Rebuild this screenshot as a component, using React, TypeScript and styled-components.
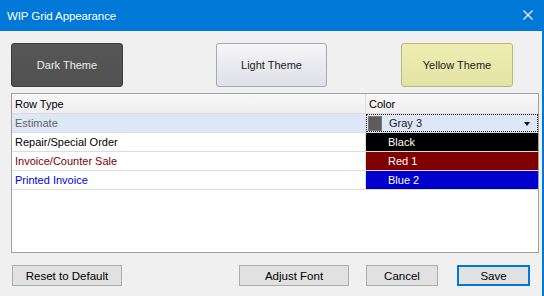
import React from "react";
import styled, { createGlobalStyle } from "styled-components";

const Global = createGlobalStyle`
  html, body { margin: 0; padding: 0; background: #f0f0f0; }
  * { box-sizing: border-box; }
`;

const Window = styled.div`
  width: 544px;
  height: 296px;
  background: #f0f0f0;
  border-right: 2px solid #0078d7;
  display: flex;
  flex-direction: column;
  font-family: "Liberation Sans", Arial, sans-serif;
  overflow: hidden;
`;

const TitleBar = styled.div`
  height: 31px;
  flex: none;
  background: #0078d7;
  display: flex;
  align-items: center;
  justify-content: space-between;
  padding: 0 9px 0 7px;
  color: #ffffff;
  font-size: 12px;
`;

const Title = styled.span`
  font-family: "Liberation Sans", Arial, sans-serif;
  font-size: 11.5px;
  letter-spacing: -0.1px;
`;

const Close = styled.svg`
  width: 10px;
  height: 10px;
  margin-bottom: 1px;
`;

const ThemeRow = styled.div`
  display: flex;
  padding: 12px 0 0 11px;
  height: 56px;
  flex: none;
`;

const variants = {
  dark: { bg: "linear-gradient(#565656, #515151)", border: "#3c3c3c", color: "#ececec" },
  light: { bg: "linear-gradient(#f6f6f8, #dfe1e7)", border: "#a8a9b0", color: "#1a1a1a" },
  yellow: { bg: "linear-gradient(#eeeeb2, #e3e3a6)", border: "#b9b97c", color: "#1a1a1a" },
};

const ThemeButton = styled.div<{ $v: keyof typeof variants; $ml: number; $w: number }>`
  width: ${(p) => p.$w}px;
  height: 44px;
  margin-left: ${(p) => p.$ml}px;
  border-radius: 3px;
  border: 1px solid ${(p) => variants[p.$v].border};
  background: ${(p) => variants[p.$v].bg};
  color: ${(p) => variants[p.$v].color};
  display: flex;
  align-items: center;
  justify-content: center;
  font-size: 11px;
`;

const Grid = styled.div`
  margin: 6px 0 0 11px;
  width: 528px;
  height: 160px;
  flex: none;
  border: 1px solid #a0a0a8;
  background: #ffffff;
  display: flex;
  flex-direction: column;
`;

const Row = styled.div<{ $header?: boolean; $bg?: string }>`
  display: grid;
  grid-template-columns: 354px 1fr;
  height: ${(p) => (p.$header ? 20 : 19)}px;
  border-bottom: 1px solid #dcdcdc;
  background: ${(p) => (p.$header ? "linear-gradient(#f7f7f7, #efefef)" : p.$bg || "#ffffff")};
  flex: none;
`;

const Cell = styled.div<{ $color?: string; $bg?: string }>`
  display: flex;
  align-items: center;
  padding-left: 3px;
  font-size: 11px;
  color: ${(p) => p.$color || "#000000"};
  background: ${(p) => p.$bg || "transparent"};
  border-right: 1px solid #dcdcdc;
  white-space: nowrap;
  &:last-child { border-right: none; }
`;

const ColorCell = styled.div<{ $bg: string; $focus?: boolean }>`
  display: flex;
  align-items: center;
  padding-left: 22px;
  font-size: 11px;
  color: ${(p) => (p.$focus ? "#1a1a1a" : "#ffffff")};
  background: ${(p) => p.$bg};
  border: ${(p) => (p.$focus ? "1px dotted #222" : "none")};
  position: relative;
`;

const Swatch = styled.span`
  position: absolute;
  left: 1px;
  top: 1px;
  width: 14px;
  height: 15px;
  background: #5c5c5c;
  border: 1px solid #7a7a7a;
`;

const Arrow = styled.span`
  position: absolute;
  right: 7px;
  top: 7px;
  width: 0;
  height: 0;
  border-left: 3.5px solid transparent;
  border-right: 3.5px solid transparent;
  border-top: 4px solid #111;
`;

const ButtonRow = styled.div`
  display: flex;
  padding: 12px 0 0 12px;
`;

const Btn = styled.div<{ $w: number; $ml?: number; $default?: boolean }>`
  width: ${(p) => p.$w}px;
  height: 21px;
  margin-left: ${(p) => p.$ml || 0}px;
  background: #e1e1e1;
  border: ${(p) => (p.$default ? "2px solid #0078d7" : "1px solid #adadad")};
  display: flex;
  align-items: center;
  justify-content: center;
  font-size: 11.5px;
  color: #000;
`;

const rows = [
  { name: "Estimate", color: "#646464", bg: "#dde7f7", label: "Gray 3", cbg: "#dde7f7", focus: true },
  { name: "Repair/Special Order", color: "#000000", label: "Black", cbg: "#000000" },
  { name: "Invoice/Counter Sale", color: "#800000", label: "Red 1", cbg: "#800000" },
  { name: "Printed Invoice", color: "#0000e0", label: "Blue 2", cbg: "#0000cc" },
];

export default function App() {
  return (
    <>
      <Global />
      <Window>
        <TitleBar>
          <Title>WIP Grid Appearance</Title>
          <Close viewBox="0 0 10 10">
            <path d="M0.5 0.5 L9.5 9.5 M9.5 0.5 L0.5 9.5" stroke="#fff" strokeWidth="1.1" />
          </Close>
        </TitleBar>
        <ThemeRow>
          <ThemeButton $v="dark" $ml={0} $w={112}>Dark Theme</ThemeButton>
          <ThemeButton $v="light" $ml={93} $w={111}>Light Theme</ThemeButton>
          <ThemeButton $v="yellow" $ml={74} $w={112}>Yellow Theme</ThemeButton>
        </ThemeRow>
        <Grid>
          <Row $header>
            <Cell>Row Type</Cell>
            <Cell>Color</Cell>
          </Row>
          {rows.map((r) => (
            <Row key={r.name} $bg={r.bg}>
              <Cell $color={r.color}>{r.name}</Cell>
              <ColorCell $bg={r.cbg} $focus={r.focus}>
                {r.focus && <Swatch />}
                {r.label}
                {r.focus && <Arrow />}
              </ColorCell>
            </Row>
          ))}
        </Grid>
        <ButtonRow>
          <Btn $w={110}>Reset to Default</Btn>
          <Btn $w={110} $ml={117}>Adjust Font</Btn>
          <Btn $w={72} $ml={17}>Cancel</Btn>
          <Btn $w={73} $ml={19} $default>Save</Btn>
        </ButtonRow>
      </Window>
    </>
  );
}
